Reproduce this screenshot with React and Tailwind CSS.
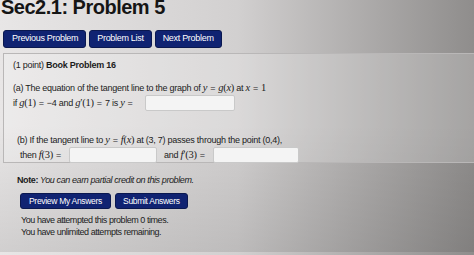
const m = "font-['Liberation_Serif',serif] italic text-[10.5px]";
const r = "font-['Liberation_Serif',serif] text-[10.5px]";

function Eq() {
  return <span className="mx-[3px]">=</span>;
}

export default function App() {
  const btn =
    "bg-[#102372] text-white rounded-[3px] border border-[#0a1850] flex items-center tracking-[-0.3px]";
  const input = "bg-[#f4f4f4] border border-[#c9c9c9] rounded-[2px] h-[16px]";
  return (
    <div className="w-[474px] h-[255px] overflow-hidden font-['Liberation_Sans',Arial,sans-serif] text-[#1c1c1c] bg-linear-to-r from-[#e8e6e6] via-[#d2d0d0] to-[#8f8d8c]">
      <div className="bg-linear-to-b from-white/0 via-black/0 to-black/10 h-full">
        <h1 className="text-[20px] font-bold leading-none mt-[-3px] ml-[1px] tracking-[-0.5px] text-[#151515]">
          Sec2.1: Problem 5
        </h1>
        <div className="flex gap-[3px] ml-[3px] mt-[13px] text-[9px]">
          <button className={`${btn} h-[18px] pl-[8px] pr-[7px]`}>Previous Problem</button>
          <button className={`${btn} h-[18px] px-[7px]`}>Problem List</button>
          <button className={`${btn} h-[18px] px-[7px]`}>Next Problem</button>
        </div>
        <div className="mt-[5px] ml-[3px] border-t border-l border-b border-[#b9b7b7] bg-white/20 h-[110px] pl-[9px] pt-[6px] text-[9px] tracking-[-0.25px]">
          <p className="leading-[11px]">
            (1 point) <span className="font-bold">Book Problem 16</span>
          </p>
          <div className="mt-[10px]">
            <p className="leading-[13px]">
              (a) The equation of the tangent line to the graph of <span className={m}>y</span>
              <Eq />
              <span className={m}>g</span>
              <span className={r}>(</span>
              <span className={m}>x</span>
              <span className={r}>)</span> at <span className={m}>x</span>
              <Eq />
              <span className={r}>1</span>
            </p>
            <div className="flex items-center gap-[4px] h-[16px]">
              <span className="whitespace-nowrap">
                if <span className={m}>g</span>
                <span className={r}>(1)</span>
                <Eq />
                −4 and <span className={m}>g</span>
                <span className={r}>′(1)</span>
                <Eq />7 is <span className={m}>y</span>
                <Eq />
              </span>
              <div className={`${input} w-[90px] ml-[5px]`} />
            </div>
          </div>
          <div className="mt-[22px] ml-[4px]">
            <p className="leading-[13px]">
              (b) If the tangent line to <span className={m}>y</span>
              <Eq />
              <span className={m}>f</span>
              <span className={r}>(</span>
              <span className={m}>x</span>
              <span className={r}>)</span> at (3, 7) passes through the point (0,4),
            </p>
            <div className="flex items-center gap-[4px] h-[16px] ml-[3px]">
              <span className="whitespace-nowrap">
                then <span className={m}>f</span>
                <span className={r}>(3)</span>
                <Eq />
              </span>
              <div className={`${input} w-[88px] ml-[1px]`} />
              <span className="ml-[3px] whitespace-nowrap">
                and <span className={m}>f</span>
                <span className={r}>′(3)</span>
                <Eq />
              </span>
              <div className={`${input} w-[86px] ml-[1px]`} />
            </div>
          </div>
        </div>
        <div className="ml-[17px] mt-[12px] text-[9px] tracking-[-0.4px]">
          <p className="leading-[11px]">
            <span className="font-bold">Note:</span> <i>You can earn partial credit on this problem.</i>
          </p>
          <div className="flex gap-[4px] mt-[7px] ml-[3px] text-[8.5px]">
            <button className={`${btn} h-[16px] px-[8px]`}>Preview My Answers</button>
            <button className={`${btn} h-[16px] px-[7px]`}>Submit Answers</button>
          </div>
          <div className="mt-[5px] ml-[4px] leading-[12px] tracking-[-0.45px]">
            <p>You have attempted this problem 0 times.</p>
            <p>You have unlimited attempts remaining.</p>
          </div>
        </div>
      </div>
    </div>
  );
}
